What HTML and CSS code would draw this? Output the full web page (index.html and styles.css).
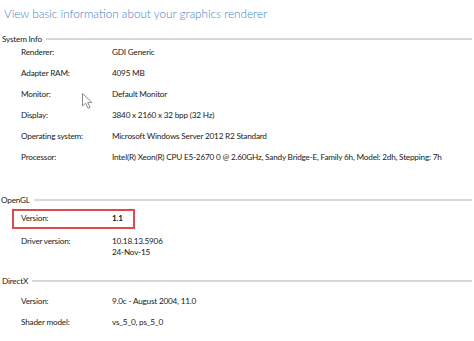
FILE: index.html
```html
<!DOCTYPE html>
<html lang="en">
<head>
    <meta charset="UTF-8">
    <meta name="viewport" content="width=device-width, initial-scale=1.0">
    <title>Graphics renderer</title>
    <link rel="stylesheet" href="styles.css">
</head>
<body>
    <main class="panel">
        <h1 class="title">View basic information about your graphics renderer</h1>

        <section class="group group-system">
            <div class="group-head"><span>System Info</span></div>
            <dl class="rows">
                <div class="row"><dt>Renderer:</dt><dd>GDI Generic</dd></div>
                <div class="row"><dt>Adapter RAM:</dt><dd>4095 MB</dd></div>
                <div class="row"><dt>Monitor:</dt><dd>Default Monitor</dd></div>
                <div class="row"><dt>Display:</dt><dd>3840 x 2160 x 32 bpp (32 Hz)</dd></div>
                <div class="row"><dt>Operating system:</dt><dd>Microsoft Windows Server 2012 R2 Standard</dd></div>
                <div class="row"><dt>Processor:</dt><dd>Intel(R) Xeon(R) CPU E5-2670 0 @ 2.60GHz, Sandy Bridge-E, Family 6h, Model: 2dh, Stepping: 7h</dd></div>
            </dl>
        </section>

        <section class="group group-opengl">
            <div class="group-head"><span>OpenGL</span></div>
            <dl class="rows">
                <div class="row row-marked"><dt>Version:</dt><dd class="strong">1.1</dd></div>
                <div class="row"><dt>Driver version:</dt><dd>10.18.13.5906<br>24-Nov-15</dd></div>
            </dl>
        </section>

        <section class="group group-directx">
            <div class="group-head"><span>DirectX</span></div>
            <dl class="rows">
                <div class="row"><dt>Version:</dt><dd>9.0c - August 2004, 11.0</dd></div>
                <div class="row"><dt>Shader model:</dt><dd>vs_5_0, ps_5_0</dd></div>
            </dl>
        </section>

        <!-- mouse pointer left in the capture -->
        <svg class="pointer" width="14" height="18" viewBox="0 0 14 18">
            <path d="M1.5 1.5 L1.5 14 L4.6 11.2 L7 16.3 L9 15.4 L6.7 10.4 L10.8 10.4 Z" fill="#fff" stroke="#8a8a8a" stroke-width="1" stroke-linejoin="round"/>
        </svg>
    </main>
</body>
</html>
```

FILE: styles.css
```css
body {
    margin: 0;
    background-color: #fff;
    color: #1a1a1a;
    font-family: Lato, "Liberation Sans", sans-serif;
    font-size: 8.2px;
    letter-spacing: -0.2px;
}
.panel {
    position: relative;
    height: 341px;
    overflow: hidden;
}
.title {
    margin: 5px 0 0 4px;
    font-size: 11.7px;
    line-height: 16px;
    font-weight: 300;
    letter-spacing: 0;
    color: #3f7fc5;
}
.group-head {
    display: flex;
    align-items: center;
    gap: 4px;
    margin-right: 2px;
    padding-left: 2px;
    line-height: 12px;
}
.group-head::after {
    content: "";
    flex: 1;
    height: 2px;
    background-color: #d8d8d8;
}
.rows {
    display: flex;
    flex-direction: column;
    gap: 10px;
    margin: 0;
}
.row {
    display: grid;
    grid-template-columns: 91px 1fr;
    padding-left: 21px;
    line-height: 11px;
}
.row dt,
.row dd {
    margin: 0;
    white-space: nowrap;
}
.strong {
    font-weight: 700;
}
.group-system {
    margin-top: 12px;
}
.group-system .rows {
    margin-top: 1.5px;
}
.group-opengl {
    margin-top: 31px;
}
.group-opengl .group-head {
    padding-left: 1px;
}
.group-opengl .rows {
    margin-top: 3px;
    gap: 7.5px;
}
.row-marked {
    width: 123px;
    box-sizing: border-box;
    margin-left: 12px;
    padding: 2.5px 0 2.5px 7px;
    border: 2px solid #e04a4f;
}
.group-directx {
    margin-top: 16.5px;
}
.group-directx .rows {
    margin-top: 9.5px;
}
.pointer {
    position: absolute;
    left: 81px;
    top: 92px;
}
```
